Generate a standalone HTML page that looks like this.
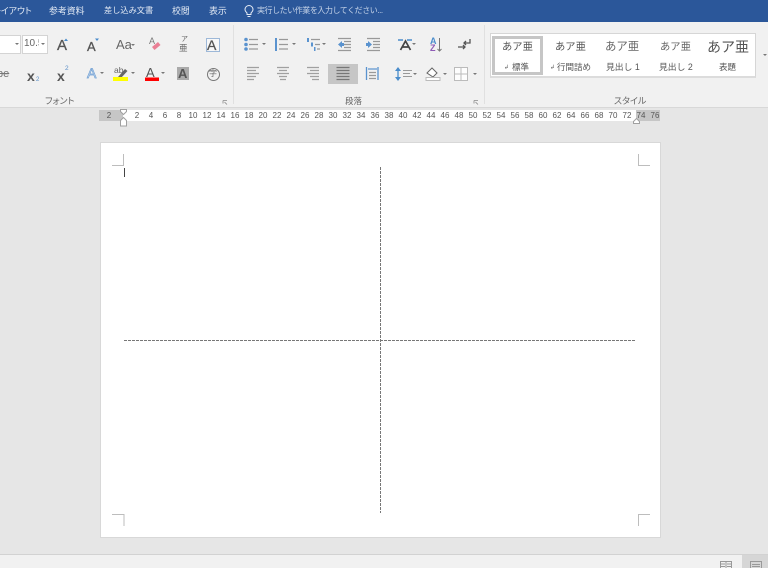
<!DOCTYPE html>
<html lang="ja"><head><meta charset="utf-8"><title>Word</title>
<style>
html,body{margin:0;padding:0;width:768px;height:568px;overflow:hidden;background:#e6e6e6}
body{position:relative;font-family:"Liberation Sans","Noto Sans CJK JP",sans-serif;color:#555}
div{position:absolute}
#w{left:0;top:0;width:768px;height:568px;filter:blur(.3px)}
.t{position:absolute;white-space:nowrap;line-height:1}
.j{font-feature-settings:"palt"}
.tab{color:#e4ebf5;font-size:8.900px;top:7px}
.lbl{font-size:9px;color:#666;top:97px}
.n{position:absolute;top:111px;width:16px;text-align:center;font-size:8px;line-height:10px;color:#555}
svg{position:absolute;left:0;top:0}
.st{color:#555;font-size:10.300px;top:43px}
.sl{color:#555;font-size:8.500px;top:63px}
.ar{font-size:6px;top:65px;color:#666}
</style></head><body><div id="w">
<div style="left:0;top:0;width:768px;height:22px;background:#2b579a"></div>
<span class="t tab j" style="left:-7px">レイアウト</span>
<span class="t tab" style="left:49px">参考資料</span>
<span class="t tab" style="left:104px;font-size:8.200px">差し込み文書</span>
<span class="t tab" style="left:172px">校閲</span>
<span class="t tab" style="left:209px">表示</span>
<span class="t tab" style="left:257px;font-size:8px;letter-spacing:-.45px;color:#c5d3e8">実行したい作業を入力してください...</span>

<div style="left:0;top:22px;width:768px;height:85px;background:#f1f1f1;border-bottom:1px solid #d8d8d8"></div>
<div style="left:233px;top:25px;width:1px;height:79px;background:#e0e0e0"></div>
<div style="left:484px;top:25px;width:1px;height:79px;background:#e0e0e0"></div>

<!-- page -->
<div style="left:101px;top:143px;width:559px;height:394px;background:#fff;box-shadow:0 0 0 1px #d8d8d8"></div>

<div style="left:-2px;top:35px;width:21px;height:17px;background:#fff;border:1px solid #d4d4d4"></div>
<div style="left:22px;top:35px;width:24px;height:17px;background:#fff;border:1px solid #d4d4d4"></div>
<span class="t" style="left:24px;top:39px;font-size:10px;color:#666">10.5</span>
<div style="left:39px;top:37px;width:7px;height:14px;background:#fff"></div>

<span class="t" style="left:57px;top:38px;font-size:15px;color:#555;-webkit-text-stroke:.3px #555">A</span>
<span class="t" style="left:87px;top:40px;font-size:13px;color:#555;-webkit-text-stroke:.3px #555">A</span>
<span class="t" style="left:116px;top:38px;font-size:13px;color:#666">Aa</span>
<span class="t" style="left:149px;top:37px;font-size:9px;color:#777">A</span>
<span class="t" style="left:181px;top:36px;font-size:7px;color:#666">ア</span>
<span class="t" style="left:179px;top:44px;font-size:8.500px;color:#666">亜</span>
<div style="left:206px;top:38px;width:12px;height:12px;border:1px solid #9db8d8;background:#f8f8f8"></div>
<span class="t" style="left:207px;top:38px;font-size:14px;color:#555;-webkit-text-stroke:.3px #555">A</span>

<span class="t" style="left:-3px;top:69px;font-size:11px;color:#777;text-decoration:line-through">be</span>
<span class="t" style="left:27px;top:69px;font-size:14px;font-weight:bold;color:#555">x</span>
<span class="t" style="left:36px;top:77px;font-size:6px;color:#5a8fc8">2</span>
<span class="t" style="left:57px;top:69px;font-size:14px;font-weight:bold;color:#555">x</span>
<span class="t" style="left:65px;top:66px;font-size:6.500px;color:#5a8fc8">2</span>
<span class="t" style="left:87px;top:66px;font-size:14px;color:#dfe9f5;-webkit-text-stroke:.7px #6f9fd3">A</span>
<span class="t" style="left:114px;top:66px;font-size:8.500px;color:#666">ab</span>
<span class="t" style="left:146px;top:66px;font-size:13px;color:#555">A</span>
<div style="left:177px;top:67px;width:12px;height:13px;background:#aaa"></div>
<span class="t" style="left:178px;top:67px;font-size:13px;font-weight:bold;color:#555">A</span>
<div style="left:207px;top:68px;width:11px;height:11px;border:1px solid #777;border-radius:50%"></div>
<span class="t" style="left:209px;top:70px;font-size:8px;color:#666">字</span>
<span class="t lbl j" style="left:45px">フォント</span>
<span class="t lbl" style="left:345px;font-size:8.500px">段落</span>
<span class="t lbl j" style="left:614px">スタイル</span>

<div style="left:328px;top:64px;width:30px;height:20px;background:#c6c6c6"></div>

<svg width="768" height="568" viewBox="0 0 768 568" fill="none">
<!-- lightbulb -->
<path d="M247 13c-1-1-2-2-2-3.500a4 4 0 0 1 8 0c0 1.500-1 2.500-2 3.500v1.500h-4z" stroke="#e4ebf5"/>
<path d="M247.500 16.500h3" stroke="#e4ebf5"/>
<path d="M15 43l2 2 2-2zM41 43l2 2 2-2z" fill="#777"/>
<path d="M64 41l2-2.500 2 2.500zM95 38.500l2 2.500 2-2.500z" fill="#4a8ccb"/>
<path d="M131 44l2 2 2-2zM100 72l2 2 2-2zM131 72l2 2 2-2zM161 72l2 2 2-2zM262 43l2 2 2-2zM292 43l2 2 2-2zM322 43l2 2 2-2zM412 43l2 2 2-2zM413 73l2 2 2-2zM443 73l2 2 2-2zM473 73l2 2 2-2z" fill="#777"/>
<path d="M152 47l6-5 2.500 3-6 5z" fill="#ea7f95"/>
<path d="M118 77l7-8 2.500 2-7 7.500z" fill="#666"/>
<rect x="113" y="77" width="15" height="4" fill="#ffff00"/>
<rect x="145" y="77.500" width="14" height="3.500" fill="#ff0000"/>
<!-- list icons -->
<g stroke="#999" stroke-width="1.200"><path d="M249 39.500h9M249 44.500h9M249 49h9"/>
<path d="M279 39.500h9M279 44.500h9M279 49h9"/>
<path d="M311 39.500h9M315 44.500h5M317 49h3"/>
<path d="M338 38.500h13M344 41.500h7M344 44.500h7M344 47.500h7M338 50.500h13"/>
<path d="M367 38.500h13M373 41.500h7M373 44.500h7M373 47.500h7M367 50.500h13"/></g>
<g fill="#5a93cf"><circle cx="246" cy="39.500" r="1.800"/><circle cx="246" cy="44.500" r="1.800"/><circle cx="246" cy="49" r="1.800"/>
<rect x="275" y="38" width="2" height="13"/><rect x="307" y="38" width="2" height="4"/><rect x="311" y="42.500" width="2" height="4"/><rect x="314" y="47" width="1.500" height="4"/>
<path d="M338 44.500l4-3.500v2h2v3h-2v2zM372 44.500l-4-3.500v2h-2v3h2v2z"/></g>
<!-- A width -->
<path d="M400.500 50l5-9 5 9M402.500 47h6" stroke="#444" stroke-width="1.700"/>
<path d="M398 40h5M407 40h5" stroke="#4a8ccb" stroke-width="1.500"/>
<!-- sort -->
<path d="M439.500 38v13M437.500 49l2 2 2-2" stroke="#777"/>
<!-- return -->
<path d="M470 39v4h-6M466 41l-2 2 2 2M458 47h7M463 45l2 2-2 2" stroke="#555" stroke-width="1.300"/>
<!-- align -->
<g stroke="#a0a0a0" stroke-width="1.200">
<path d="M247 67.500h12M247 70.500h9M247 73.500h12M247 76.500h9M247 79.500h7"/>
<path d="M277 67.500h12M279 70.500h8M277 73.500h12M279 76.500h8M280 79.500h6"/>
<path d="M307 67.500h12M310 70.500h9M307 73.500h12M310 76.500h9M312 79.500h7"/></g>
<path d="M336.500 67.500h13M336.500 70.500h13M336.500 73.500h13M336.500 76.500h13M336.500 79.500h13" stroke="#777" stroke-width="1.200"/>
<!-- distribute -->
<path d="M366.500 67v13M378 67v13" stroke="#5a93cf" stroke-width="1.300"/>
<path d="M368 69h9" stroke="#5a93cf" stroke-width="1.200"/>
<path d="M369 72.500h7M369 75.500h7M369 78.500h7" stroke="#999" stroke-width="1.200"/>
<!-- spacing -->
<path d="M398 68v12" stroke="#4a8ccb" stroke-width="1.300"/>
<path d="M395 71l3-4 3 4zM395 77l3 4 3-4z" fill="#4a8ccb"/>
<path d="M403 70.500h9M403 73.500h7M403 76.500h9" stroke="#999" stroke-width="1.100"/>
<!-- fill -->
<path d="M427 73l5-5 5 5-4 4z" stroke="#666" fill="#fff"/>
<rect x="426" y="77.500" width="14" height="3" fill="#fff" stroke="#bbb"/>
<!-- borders -->
<path d="M454.500 67.500h13v13h-13zM461 67.500v13M454.500 74h13" stroke="#bbb" fill="#fdfdfd"/>
<!-- dialog launchers -->
<path d="M223 100.500h4M223 100.500v3M224.500 102l2.500 2.500M474 100.500h4M474 100.500v3M475.500 102l2.500 2.500" stroke="#888" stroke-width=".8"/>
<!-- more -->
<path d="M763 54l2 2 2-2z" fill="#777"/>
<!-- corner marks -->
<path d="M123.500 154v11.500H112M112 514.500h12V526M638.500 154v11.500H650M650 514.500h-11.500V526" stroke="#bdbdbd"/>
<path d="M124.500 168v9" stroke="#444"/>
<path d="M380.500 167v346" stroke="#777" stroke-dasharray="3 1"/>
<path d="M124 340.500h512" stroke="#777" stroke-dasharray="3 1"/>
</svg>
<span class="t" style="left:430px;top:37px;font-size:9px;font-weight:bold;color:#4a8ccb">A</span>
<span class="t" style="left:430px;top:44px;font-size:9px;font-weight:bold;color:#8e5bb5">Z</span>

<!-- styles gallery -->
<div style="left:490px;top:33px;width:264px;height:42px;background:#fff;border:1px solid #d6d6d6;border-bottom:2px solid #dcdcdc"></div>
<div style="left:492px;top:36px;width:45px;height:33px;border:3px solid #c6c6c6;background:#fff"></div>
<span class="t st" style="left:502px">あア亜</span>
<span class="t ar" style="left:504px">↲</span><span class="t sl" style="left:512px">標準</span>
<span class="t st" style="left:555px">あア亜</span>
<span class="t ar" style="left:550px">↲</span><span class="t sl" style="left:557px">行間詰め</span>
<span class="t st" style="left:605px;font-size:11.400px;top:42px;color:#666">あア亜</span>
<span class="t sl" style="left:606px;font-size:8.800px">見出し 1</span>
<span class="t st" style="left:660px;color:#666">あア亜</span>
<span class="t sl" style="left:659px;font-size:8.800px">見出し 2</span>
<span class="t st" style="left:707px;top:40px;font-size:14px">あア亜</span>
<span class="t sl" style="left:719px">表題</span>

<!-- ruler -->
<div style="left:99px;top:110px;width:561px;height:11px;background:#c6c6c6"></div>
<div style="left:123px;top:110px;width:513px;height:11px;background:#fff"></div>
<svg width="768" height="568" viewBox="0 0 768 568" fill="none">
<path d="M120.500 109.500h6v2l-3 3-3-3zM120.500 120.500l3-3 3 3v5.500h-6z" fill="#fff" stroke="#a0a0a0"/>
<path d="M633.500 121.500l3-3 3 3v2h-6z" fill="#fff" stroke="#a0a0a0"/>
</svg>
<span class="n" style="left:101px">2</span>
<span class="n" style="left:129px">2</span><span class="n" style="left:143px">4</span><span class="n" style="left:157px">6</span><span class="n" style="left:171px">8</span><span class="n" style="left:185px">10</span><span class="n" style="left:199px">12</span><span class="n" style="left:213px">14</span><span class="n" style="left:227px">16</span><span class="n" style="left:241px">18</span><span class="n" style="left:255px">20</span><span class="n" style="left:269px">22</span><span class="n" style="left:283px">24</span><span class="n" style="left:297px">26</span><span class="n" style="left:311px">28</span><span class="n" style="left:325px">30</span><span class="n" style="left:339px">32</span><span class="n" style="left:353px">34</span><span class="n" style="left:367px">36</span><span class="n" style="left:381px">38</span><span class="n" style="left:395px">40</span><span class="n" style="left:409px">42</span><span class="n" style="left:423px">44</span><span class="n" style="left:437px">46</span><span class="n" style="left:451px">48</span><span class="n" style="left:465px">50</span><span class="n" style="left:479px">52</span><span class="n" style="left:493px">54</span><span class="n" style="left:507px">56</span><span class="n" style="left:521px">58</span><span class="n" style="left:535px">60</span><span class="n" style="left:549px">62</span><span class="n" style="left:563px">64</span><span class="n" style="left:577px">66</span><span class="n" style="left:591px">68</span><span class="n" style="left:605px">70</span><span class="n" style="left:619px">72</span><span class="n" style="left:633px">74</span><span class="n" style="left:647px">76</span>

<!-- status bar -->
<div style="left:0;top:554px;width:768px;height:14px;background:#f1f1f1;border-top:1px solid #d2d2d2;box-sizing:border-box"></div>
<div style="left:742px;top:555px;width:26px;height:13px;background:#d6d6d6"></div>
<svg width="768" height="568" viewBox="0 0 768 568" fill="none">
<path d="M720.500 561.500h11v7h-11zM726 561v7M721 564h4M721 566.500h4M727 564h4M727 566.500h4" stroke="#999"/>
<path d="M750.500 561.500h11v7h-11zM752 564.500h8M752 566.500h8" stroke="#999"/>
</svg>
</div></body></html>
